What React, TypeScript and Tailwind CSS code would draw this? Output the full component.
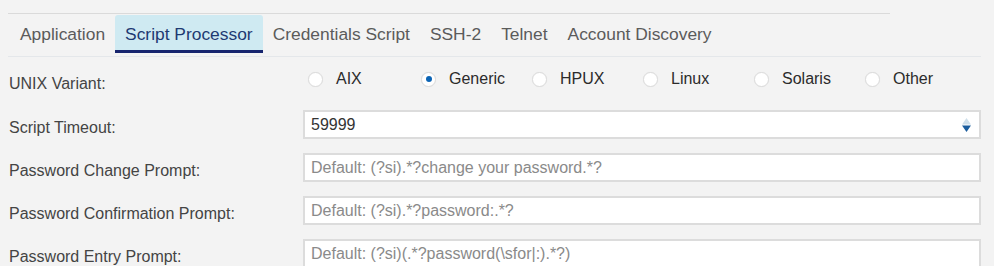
const tabs = ["Application", "Script Processor", "Credentials Script", "SSH-2", "Telnet", "Account Discovery"]
const variants = ["AIX", "Generic", "HPUX", "Linux", "Solaris", "Other"]

const prompts = [
  { label: "Password Change Prompt:", placeholder: "Default: (?si).*?change your password.*?" },
  { label: "Password Confirmation Prompt:", placeholder: "Default: (?si).*?password:.*?" },
  { label: "Password Entry Prompt:", placeholder: "Default: (?si)(.*?password(\\sfor|:).*?)" },
]

function Radio({ label, checked, wide }: { label: string; checked?: boolean; wide?: boolean }) {
  return (
    <label className={wide ? "flex w-[113px] items-center gap-[13px]" : "flex w-[111px] items-center gap-[13px]"}>
      <span className="flex h-[15px] w-[15px] items-center justify-center rounded-full border border-[#dcdcdc] bg-white shadow-[0_0_1px_rgba(0,0,0,0.08)]">
        {checked && <span className="h-[6px] w-[6px] rounded-full bg-[#0b64b5]" />}
      </span>
      <span className="text-[16px] leading-[20px] text-[#2b2b2b]">{label}</span>
    </label>
  )
}

function Row({ label, children }: { label: string; children: React.ReactNode }) {
  return (
    <div className="flex h-[43px] items-start">
      <div className="w-[294px] pt-[8px] text-[16px] leading-[20px] text-[#444]">{label}</div>
      {children}
    </div>
  )
}

export default function App() {
  return (
    <div
      className="h-[266px] w-[994px] overflow-hidden bg-[#f3f3f3]"
      style={{ fontFamily: '"Liberation Sans", Arial, sans-serif' }}
    >
      <div className="ml-[8px] mt-[13px] h-px w-[882px] bg-[#dadada]" />

      <div className="ml-[8px] flex w-[973px] border-b border-[#e4e7ea] pb-[3px] pl-[2px] pt-[1px]">
        {tabs.map((t) => {
          const active = t === "Script Processor"
          return (
            <div
              key={t}
              className={
                active
                  ? "flex h-[38px] items-center rounded-t-[3px] bg-[#cfeaf2] px-[10px] pt-[1px] text-[17.4px] text-[#1e3a72] shadow-[inset_0_-3px_0_#17256e]"
                  : "flex h-[38px] items-center px-[10px] pt-[1px] text-[17.4px] text-[#5b5b5b]"
              }
            >
              {t}
            </div>
          )
        })}
      </div>

      <div className="pl-[9px]">
        <div className="flex h-[53px] items-start">
          <div className="w-[294px] pt-[17px] text-[16px] leading-[20px] text-[#444]">UNIX Variant:</div>
          <div className="flex pl-[5px] pt-[12px]">
            {variants.map((v, i) => (
              <Radio key={v} label={v} checked={v === "Generic"} wide={i === 0} />
            ))}
          </div>
        </div>

        <Row label="Script Timeout:">
          <div className="flex h-[29px] w-[678px] items-center justify-between border-2 border-[#dcdcdc] bg-white pl-[6px] pr-[8px] text-[16px] text-[#333]">
            <span>59999</span>
            <svg width="9" height="16" viewBox="0 0 9 16">
              <path d="M4.5 1 L9 7.5 L0 7.5 Z" fill="#cfdfea" />
              <path d="M0 8.5 L9 8.5 L4.5 15 Z" fill="#1b5d9e" />
            </svg>
          </div>
        </Row>

        {prompts.map((p) => (
          <Row key={p.label} label={p.label}>
            <input
              readOnly
              placeholder={p.placeholder}
              className="h-[29px] w-[678px] border-2 border-[#dcdcdc] bg-white pl-[6px] text-[16px] text-[#333] outline-none placeholder:text-[#8a8a8a]"
            />
          </Row>
        ))}
      </div>
    </div>
  )
}
